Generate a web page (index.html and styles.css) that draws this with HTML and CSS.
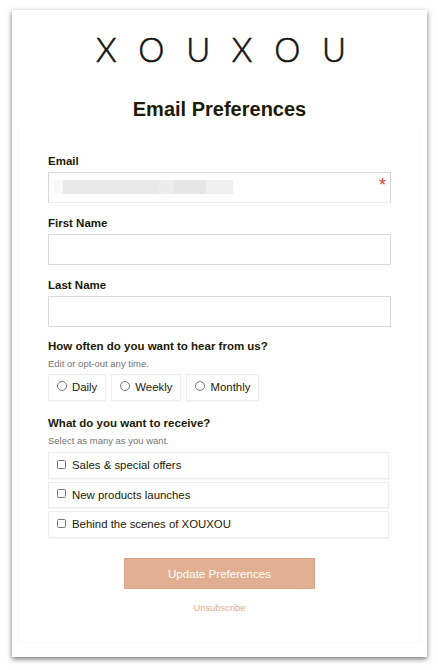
FILE: index.html
```html
<!DOCTYPE html>
<html lang="en">
<head>
    <meta charset="UTF-8">
    <meta name="viewport" content="width=device-width, initial-scale=1.0">
    <title>Email Preferences</title>
    <link rel="stylesheet" href="styles.css">
</head>
<body>
    <div class="card">
        <div class="logo"><span>X</span><span>O</span><span>U</span><span>X</span><span>O</span><span>U</span></div>
        <h1>Email Preferences</h1>

        <form class="form">
            <div class="field">
                <label for="email">Email</label>
                <div class="input email-box" id="email">
                    <div class="redacted">
                        <i class="r1"></i><i class="r2"></i><i class="r3"></i><i class="r4"></i><i class="r5"></i>
                    </div>
                    <span class="required">*</span>
                </div>
            </div>
            <div class="field">
                <label for="fname">First Name</label>
                <input class="input" type="text" id="fname" name="fname">
            </div>
            <div class="field">
                <label for="lname">Last Name</label>
                <input class="input" type="text" id="lname" name="lname">
            </div>

            <div class="group">
                <div class="question">How often do you want to hear from us?</div>
                <div class="hint">Edit or opt-out any time.</div>
                <div class="radios">
                    <label class="option"><input type="radio" name="freq">Daily</label>
                    <label class="option"><input type="radio" name="freq">Weekly</label>
                    <label class="option"><input type="radio" name="freq">Monthly</label>
                </div>
            </div>

            <div class="group">
                <div class="question">What do you want to receive?</div>
                <div class="hint">Select as many as you want.</div>
                <div class="checks">
                    <label class="option"><input type="checkbox" name="sales">Sales &amp; special offers</label>
                    <label class="option"><input type="checkbox" name="launches">New products launches</label>
                    <label class="option"><input type="checkbox" name="scenes">Behind the scenes of XOUXOU</label>
                </div>
            </div>

            <button class="submit" type="button">Update Preferences</button>
            <a class="unsubscribe">Unsubscribe</a>
        </form>
    </div>
</body>
</html>
```
FILE: styles.css
```css
* {
    box-sizing: border-box;
}

body {
    margin: 0;
    padding: 10px 0 0 12px;
    height: 670px;
    overflow: hidden;
    background-color: #fefefe;
    color: #1c1a05;
    font-family: "Liberation Sans", Arial, sans-serif;
    font-size: 11.4px;
}

.card {
    width: 415px;
    height: 647px;
    padding: 20px 6px 14px;
    background-color: #fefefe;
    box-shadow: 0 2px 5px rgba(0, 0, 0, 0.55);
}

.logo {
    display: flex;
    justify-content: space-between;
    width: 250px;
    height: 38px;
    margin-left: 78px;
    font-family: Lato, sans-serif;
    font-weight: 300;
    font-size: 33px;
    line-height: 38px;
    color: #151515;
    -webkit-text-stroke: 0.6px #151515;
}

h1 {
    margin: 29px 0 0;
    font-size: 20px;
    line-height: 24px;
    text-align: center;
}

.form {
    display: flex;
    flex-direction: column;
    height: 515px;
    margin-top: 7px;
    padding: 24px 29px 0;
    border: 1px solid #f8f8f8;
    border-top: none;
}

.field {
    height: 62px;
}

.field label {
    display: block;
    height: 20px;
    line-height: 18px;
    font-size: 11.5px;
    font-weight: bold;
}

.input {
    display: block;
    width: 343px;
    height: 31px;
    border: 1px solid #d9d9d9;
    background-color: #fefefe;
}

.email-box {
    display: flex;
    justify-content: space-between;
    padding: 7px 4px 0 5px;
    border-bottom-color: #ececec;
}

.redacted {
    display: flex;
    height: 14px;
}

.r1 { width: 9px; background-color: #f8f8f8; }
.r2 { width: 96px; background-color: #e8e8e8; }
.r3 { width: 15px; background-color: #ececec; }
.r4 { width: 32px; background-color: #e6e6e6; }
.r5 { width: 27px; background-color: #efefef; }

.required {
    margin-top: -6px;
    font-size: 18px;
    line-height: 22px;
    color: #dc4437;
}

.question {
    line-height: 16px;
    font-size: 11.5px;
    font-weight: bold;
}

.hint {
    height: 20px;
    line-height: 19px;
    font-size: 9.5px;
    color: #757575;
}

.group {
    height: 77px;
}

.radios {
    display: flex;
    gap: 5px;
}

.checks {
    display: grid;
    gap: 3px;
    width: 341px;
    margin-top: 1px;
}

.option {
    display: flex;
    align-items: center;
    height: 26.5px;
    padding: 0 8px;
    border: 1px solid #ededed;
    box-shadow: 0 1px 1px rgba(0, 0, 0, 0.03);
}

.option input {
    appearance: none;
    width: 9px;
    height: 9px;
    margin: -2px 6px 0 0;
    border: 1px solid #777;
    border-radius: 1.5px;
    background-color: #fff;
}

.option input[type="radio"] {
    width: 10px;
    height: 10px;
    margin-right: 5px;
    border-radius: 50%;
}

.submit {
    width: 191px;
    height: 31px;
    margin: 66px auto 0;
    padding: 0;
    border: 1px solid #d9a88c;
    background-color: #e1ae92;
    color: #fff;
    font-family: inherit;
    font-size: 11.6px;
}

.unsubscribe {
    margin-top: 11px;
    font-size: 9.4px;
    line-height: 16px;
    text-align: center;
    color: #e1ae92;
}
```
